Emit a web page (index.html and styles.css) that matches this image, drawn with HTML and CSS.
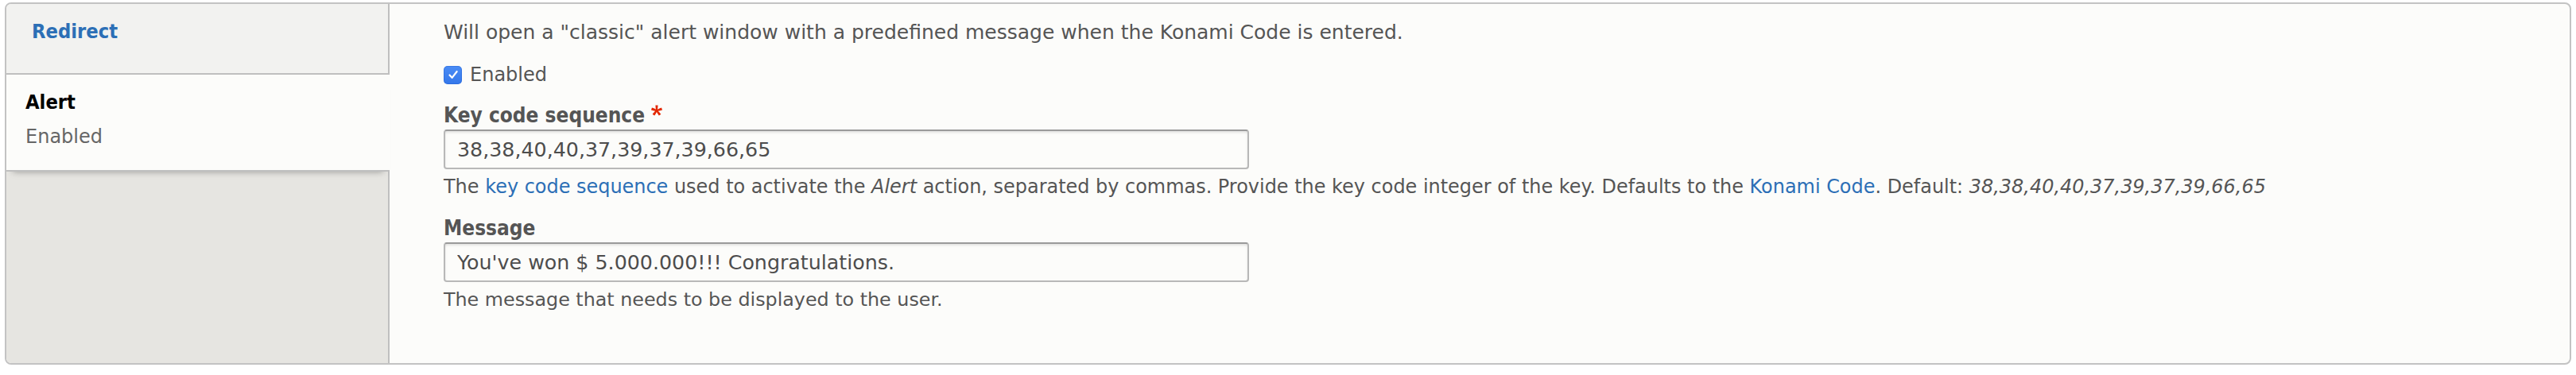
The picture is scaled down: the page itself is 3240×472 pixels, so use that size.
FILE: index.html
```html
<!DOCTYPE html>
<html lang="en">
<head>
<meta charset="utf-8">
<title>Konami Code – Alert</title>
<link rel="stylesheet" href="styles.css">
</head>
<body>
<div class="vtabs">
  <ul class="vtabs-menu">
    <li class="vtab">
      <a class="vtab-title vtab-title--link" href="#redirect">Redirect</a>
    </li>
    <li class="vtab vtab--selected">
      <strong class="vtab-title">Alert</strong>
      <span class="vtab-summary">Enabled</span>
    </li>
  </ul>
  <div class="vtabs-pane">
    <p class="pane-intro">Will open a "classic" alert window with a predefined message when the Konami Code is entered.</p>
    <div class="check-row">
      <span class="checkbox">
        <svg viewBox="0 0 24 24" width="24" height="24" aria-hidden="true"><path d="M6.6 12.6 L10.3 16.6 L17.6 7.2" fill="none" stroke="#fff" stroke-width="2.6" stroke-linecap="round" stroke-linejoin="round"/></svg>
      </span>
      <span class="check-label">Enabled</span>
    </div>
    <div class="form-item">
      <div class="form-label">Key code sequence<svg class="required" viewBox="0 0 16 16" width="14" height="14" aria-hidden="true"><path fill="#e32700" d="M0,7.562l1.114-3.438c2.565,0.906,4.43,1.688,5.59,2.35C6.398,3.553,6.237,1.544,6.22,0.447h3.511c-0.05,1.597-0.234,3.6-0.558,6.003c1.664-0.838,3.566-1.613,5.714-2.325L16,7.562c-2.05,0.678-4.06,1.131-6.028,1.356c0.984,0.856,2.372,2.381,4.166,4.575l-2.906,2.059c-0.935-1.274-2.041-3.009-3.316-5.206c-1.194,2.275-2.244,4.013-3.147,5.206l-2.856-2.059c1.872-2.307,3.211-3.832,4.017-4.575C3.849,8.516,1.872,8.062,0,7.562"/></svg></div>
      <input class="text-input" type="text" value="38,38,40,40,37,39,37,39,66,65">
      <div class="description description--long">The <a href="#">key code sequence</a> used to activate the <em>Alert</em> action, separated by commas. Provide the key code integer of the key. Defaults to the <a href="#">Konami Code</a>. Default: <em>38,38,40,40,37,39,37,39,66,65</em></div>
    </div>
    <div class="form-item form-item--next">
      <div class="form-label">Message</div>
      <input class="text-input" type="text" value="You've won $ 5.000.000!!! Congratulations.">
      <div class="description">The message that needs to be displayed to the user.</div>
    </div>
  </div>
</div>
</body>
</html>
```
FILE: styles.css
```css
html, body {
  margin: 0;
  padding: 0;
  background: #ffffff;
}

body {
  font-family: "DejaVu Sans", "Liberation Sans", sans-serif;
  color: #555555;
}

.vtabs {
  display: flex;
  margin: 3px 6px 0 6px;
  width: 3228px;
  box-sizing: border-box;
  border: 2px solid #c3c3c3;
  border-radius: 8px;
  background: #fcfcfa;
  overflow: hidden;
}

/* ---------- left tab menu ---------- */
.vtabs-menu {
  list-style: none;
  margin: 0;
  padding: 0;
  width: 480px;
  flex: 0 0 480px;
  background: #e6e5e1;
  border-right: 2px solid #bfbfbf;
}

.vtab {
  display: block;
  padding: 17px 20px 34px 32px;
  background: #f2f2f0;
  border-bottom: 2px solid #bfbfbf;
}

.vtab--selected {
  position: relative;
  z-index: 1;
  margin-right: -2px;
  padding: 17px 20px 24px 24px;
  background: #fcfcfa;
  box-shadow: 0 8px 8px -8px rgba(0, 0, 0, 0.35);
}

.vtab-title {
  display: block;
  font-family: "DejaVu Sans Condensed", "DejaVu Sans", sans-serif;
  font-weight: 700;
  font-size: 25.3px;
  line-height: 36px;
  color: #000000;
  text-decoration: none;
}

.vtab-title--link {
  color: #2c6fb6;
}

.vtab-summary {
  display: block;
  margin-top: 7px;
  font-size: 24px;
  line-height: 36px;
  color: #666666;
}

/* ---------- pane ---------- */
.vtabs-pane {
  flex: 1 1 auto;
  padding: 18px 30px 63px 68px;
}

.pane-intro {
  margin: 0;
  font-size: 25px;
  line-height: 36px;
  color: #555555;
}

.check-row {
  display: flex;
  align-items: center;
  margin-top: 17px;
  height: 36px;
}

.checkbox {
  display: flex;
  align-items: center;
  justify-content: center;
  width: 23px;
  height: 23px;
  box-sizing: border-box;
  border-radius: 5px;
  background: linear-gradient(#4a8cf5, #3477ea);
  box-shadow: inset 0 0 0 1px rgba(30, 90, 200, 0.35);
}

.checkbox svg {
  display: block;
  width: 20px;
  height: 20px;
}

.check-label {
  margin-left: 10px;
  font-size: 24px;
  line-height: 36px;
  color: #555555;
}

.form-item {
  margin-top: 15px;
}

.form-item--next {
  margin-top: 17px;
}

.form-label {
  display: flex;
  align-items: flex-start;
  font-family: "DejaVu Sans Condensed", "DejaVu Sans", sans-serif;
  font-weight: 700;
  font-size: 26px;
  line-height: 36px;
  color: #555555;
}

.required {
  display: block;
  margin: 5px 0 0 8px;
  width: 14px;
  height: 14px;
}

.text-input {
  display: block;
  box-sizing: border-box;
  width: 1013px;
  height: 50px;
  margin: 0;
  padding: 0 15px;
  border: 2px solid #b8b8b8;
  border-top-color: #9a9a9a;
  border-radius: 4px;
  background: #fcfcfa;
  box-shadow: inset 0 2px 3px rgba(0, 0, 0, 0.10);
  font-family: "DejaVu Sans", sans-serif;
  font-size: 25.3px;
  color: #4d4d4d;
  outline: none;
}

.description {
  margin-top: 5px;
  font-size: 23.8px;
  line-height: 34px;
  color: #555555;
  white-space: nowrap;
}

.description--long {
  font-size: 23.95px;
}

.description a {
  color: #2c6fb6;
  text-decoration: none;
}

.description em {
  font-style: italic;
}
```
